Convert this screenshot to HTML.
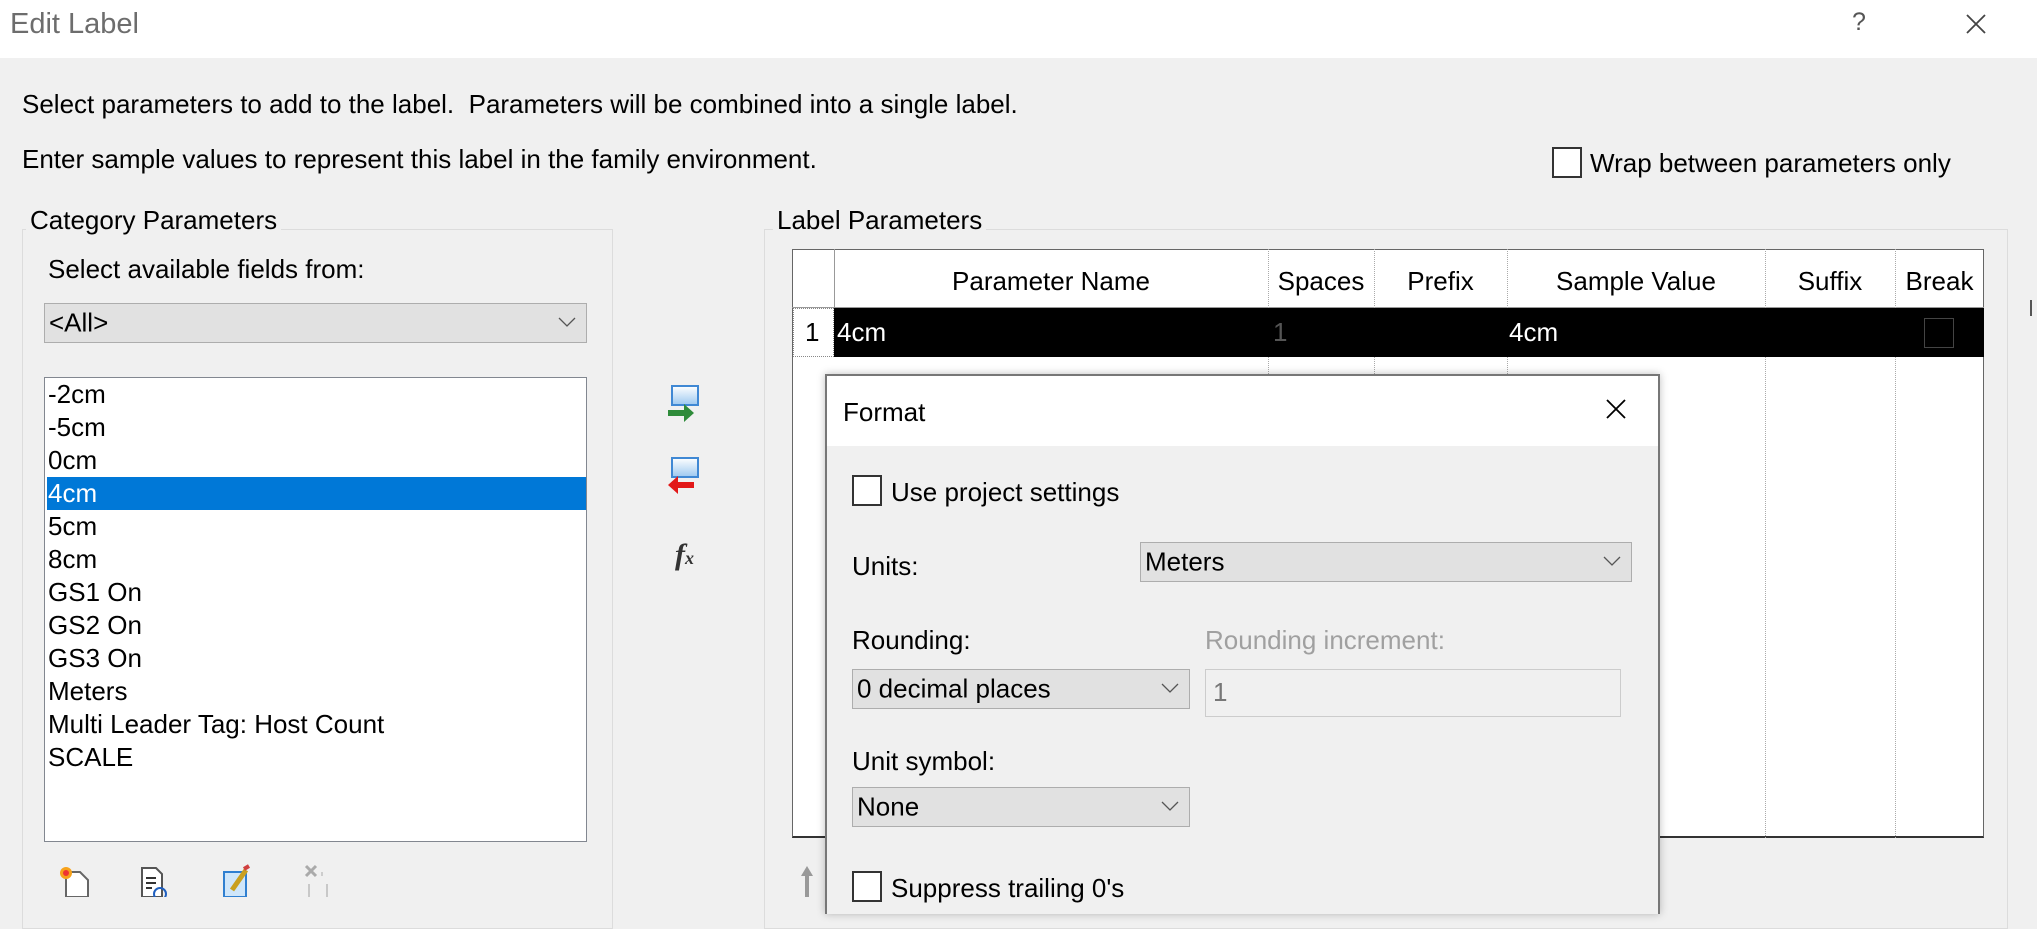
<!DOCTYPE html>
<html><head><meta charset="utf-8"><style>
*{box-sizing:border-box;margin:0;padding:0}
body{width:2037px;height:897px;background:#f0f0f0;position:relative;overflow:hidden;font-family:"Liberation Sans",sans-serif;font-size:26px;color:#000}
.a{position:absolute;white-space:nowrap}
.t{position:absolute;white-space:nowrap;line-height:1}
.dd{position:absolute;background:#e1e1e1;border:1px solid #adadad}
.dd span{position:absolute;left:4px;top:50%;transform:translateY(-50%)}
.chev{position:absolute;right:10px;top:50%;width:18px;height:10px;margin-top:-6px}
.cb{position:absolute;width:30px;height:31px;background:#fff;border:2px solid #333}
.li{position:absolute;left:2px;height:33px;line-height:33px;width:539px;padding-left:1px}
</style></head><body>
<div class="a" style="left:0;top:0;width:2037px;height:58px;background:#fff"></div>
<div class="t" style="left:10px;top:10px;font-size:29px;color:#6d6d6d">Edit Label</div>
<div class="t" style="left:1852px;top:10px;font-size:25px;color:#555">?</div>
<svg class="a" style="left:1966px;top:14px" width="20" height="20"><path d="M1 1L19 19M19 1L1 19" stroke="#444" stroke-width="1.8"/></svg>

<div class="t" style="left:22px;top:91px">Select parameters to add to the label.&nbsp; Parameters will be combined into a single label.</div>
<div class="t" style="left:22px;top:146px">Enter sample values to represent this label in the family environment.</div>
<div class="cb" style="left:1552px;top:147px"></div>
<div class="t" style="left:1590px;top:150px">Wrap between parameters only</div>

<div class="a" style="left:22px;top:229px;width:591px;height:700px;border:1px solid #dcdcdc"></div>
<div class="t" style="left:26px;top:207px;background:#f0f0f0;padding:0 4px">Category Parameters</div>
<div class="t" style="left:48px;top:256px">Select available fields from:</div>
<div class="dd" style="left:44px;top:303px;width:543px;height:40px"><span>&lt;All&gt;</span><svg class="chev" viewBox="0 0 18 10"><path d="M1 1L9 9L17 1" fill="none" stroke="#555" stroke-width="1.3"/></svg></div>
<div class="a" style="left:44px;top:377px;width:543px;height:465px;background:#fff;border:1px solid #828790">
<div class="li" style="top:0">-2cm</div>
<div class="li" style="top:33px">-5cm</div>
<div class="li" style="top:66px">0cm</div>
<div class="li" style="top:99px;background:#0078d7;color:#fff">4cm</div>
<div class="li" style="top:132px">5cm</div>
<div class="li" style="top:165px">8cm</div>
<div class="li" style="top:198px">GS1 On</div>
<div class="li" style="top:231px">GS2 On</div>
<div class="li" style="top:264px">GS3 On</div>
<div class="li" style="top:297px">Meters</div>
<div class="li" style="top:330px">Multi Leader Tag: Host Count</div>
<div class="li" style="top:363px">SCALE</div>
</div>
<svg class="a" style="left:56px;top:864px" width="40" height="33"><path d="M10 8H24L32 16V33H10Z" fill="#fff" stroke="#666" stroke-width="2"/><circle cx="10" cy="9" r="6" fill="#f7a21b"/><circle cx="10" cy="9" r="3" fill="#e33"/></svg>
<svg class="a" style="left:138px;top:864px" width="40" height="33"><path d="M4 4H18L24 10V33H4Z" fill="#fff" stroke="#555" stroke-width="2"/><path d="M8 14H18M8 19H18M8 24H14" stroke="#333" stroke-width="2"/><circle cx="22" cy="30" r="6" fill="none" stroke="#2060c0" stroke-width="2"/></svg>
<svg class="a" style="left:222px;top:864px" width="40" height="33"><rect x="2" y="8" width="22" height="25" fill="#cfe6fa" stroke="#2f7fd0" stroke-width="2"/><path d="M10 26L24 6" stroke="#c9a020" stroke-width="5"/><path d="M22 5L27 2" stroke="#d04040" stroke-width="4"/></svg>
<svg class="a" style="left:304px;top:864px" width="40" height="33"><path d="M2 2L12 12M12 2L2 12" stroke="#aaa" stroke-width="3"/><path d="M5 20V33M23 20V33" stroke="#bbb" stroke-width="1.5"/><path d="M18 8V12" stroke="#aaa"/></svg>

<svg class="a" style="left:668px;top:384px" width="42" height="44"><defs><linearGradient id="g" x1="0" y1="0" x2="0" y2="1"><stop offset="0" stop-color="#fff"/><stop offset="1" stop-color="#9cc8f0"/></linearGradient></defs><rect x="4" y="2" width="26" height="19" fill="url(#g)" stroke="#3f88d4" stroke-width="2"/><path d="M0 26H16V20L26 29L16 38V32H0Z" fill="#2e8b3a"/></svg>
<svg class="a" style="left:668px;top:456px" width="42" height="44"><rect x="4" y="2" width="26" height="19" fill="url(#g)" stroke="#3f88d4" stroke-width="2"/><path d="M26 26H10V20L0 29L10 38V32H26Z" fill="#e21818"/></svg>
<div class="t" style="left:675px;top:540px;font-family:'Liberation Serif',serif;font-style:italic;font-weight:bold;font-size:30px;color:#333">f<span style="font-size:18px">x</span></div>

<div class="a" style="left:764px;top:229px;width:1244px;height:700px;border:1px solid #dcdcdc"></div>
<div class="t" style="left:773px;top:207px;background:#f0f0f0;padding:0 4px">Label Parameters</div>
<div class="a" style="left:792px;top:249px;width:1192px;height:589px;background:#fff;border:1px solid #666;border-bottom:2px solid #333"></div>
<div class="a" style="left:792px;top:249px;width:1192px;height:59px;border-bottom:1px solid #999"></div>
<div class="a" style="left:834px;top:249px;width:1px;height:59px;background:#999"></div>
<div class="a" style="left:1268px;top:249px;width:1px;height:589px;border-left:1px dotted #aaa"></div>
<div class="a" style="left:1374px;top:249px;width:1px;height:589px;border-left:1px dotted #aaa"></div>
<div class="a" style="left:1507px;top:249px;width:1px;height:589px;border-left:1px dotted #aaa"></div>
<div class="a" style="left:1765px;top:249px;width:1px;height:589px;border-left:1px dotted #aaa"></div>
<div class="a" style="left:1895px;top:249px;width:1px;height:589px;border-left:1px dotted #aaa"></div>
<div class="t" style="left:834px;width:434px;text-align:center;top:268px">Parameter Name</div>
<div class="t" style="left:1268px;width:106px;text-align:center;top:268px">Spaces</div>
<div class="t" style="left:1374px;width:133px;text-align:center;top:268px">Prefix</div>
<div class="t" style="left:1507px;width:258px;text-align:center;top:268px">Sample Value</div>
<div class="t" style="left:1765px;width:130px;text-align:center;top:268px">Suffix</div>
<div class="t" style="left:1895px;width:89px;text-align:center;top:268px">Break</div>
<div class="a" style="left:793px;top:308px;width:41px;height:49px;border:1px dotted #888;background:#fff"></div>
<div class="t" style="left:805px;top:319px">1</div>
<div class="a" style="left:834px;top:308px;width:1150px;height:49px;background:#000"></div>
<div class="t" style="left:837px;top:319px;color:#fff">4cm</div>
<div class="t" style="left:1273px;top:319px;color:#555">1</div>
<div class="t" style="left:1509px;top:319px;color:#fff">4cm</div>
<div class="a" style="left:1924px;top:318px;width:30px;height:30px;border:1px solid #444"></div>
<svg class="a" style="left:800px;top:866px" width="14" height="31"><path d="M7 0L13 10H9V31H5V10H1Z" fill="#999"/></svg>

<div class="a" style="left:825px;top:374px;width:835px;height:540px;background:#f0f0f0;border:2px solid #777;border-bottom:none;box-shadow:0 0 8px rgba(0,0,0,.25)"></div>
<div class="a" style="left:827px;top:376px;width:831px;height:70px;background:#fff"></div>
<div class="t" style="left:843px;top:399px">Format</div>
<svg class="a" style="left:1606px;top:399px" width="20" height="20"><path d="M1 1L19 19M19 1L1 19" stroke="#000" stroke-width="1.8"/></svg>
<div class="cb" style="left:852px;top:475px"></div>
<div class="t" style="left:891px;top:479px">Use project settings</div>
<div class="t" style="left:852px;top:553px">Units:</div>
<div class="dd" style="left:1140px;top:542px;width:492px;height:40px"><span>Meters</span><svg class="chev" viewBox="0 0 18 10"><path d="M1 1L9 9L17 1" fill="none" stroke="#555" stroke-width="1.3"/></svg></div>
<div class="t" style="left:852px;top:627px">Rounding:</div>
<div class="t" style="left:1205px;top:627px;color:#a0a0a0">Rounding increment:</div>
<div class="dd" style="left:852px;top:669px;width:338px;height:40px"><span>0 decimal places</span><svg class="chev" viewBox="0 0 18 10"><path d="M1 1L9 9L17 1" fill="none" stroke="#555" stroke-width="1.3"/></svg></div>
<div class="a" style="left:1205px;top:669px;width:416px;height:48px;border:1px solid #ccc;background:#f0f0f0"></div>
<div class="t" style="left:1213px;top:679px;color:#777">1</div>
<div class="t" style="left:852px;top:748px">Unit symbol:</div>
<div class="dd" style="left:852px;top:787px;width:338px;height:40px"><span>None</span><svg class="chev" viewBox="0 0 18 10"><path d="M1 1L9 9L17 1" fill="none" stroke="#555" stroke-width="1.3"/></svg></div>
<div class="cb" style="left:852px;top:871px"></div>
<div class="t" style="left:891px;top:875px">Suppress trailing 0's</div>
<div class="a" style="left:2030px;top:300px;width:2px;height:16px;background:#555"></div>
</body></html>
